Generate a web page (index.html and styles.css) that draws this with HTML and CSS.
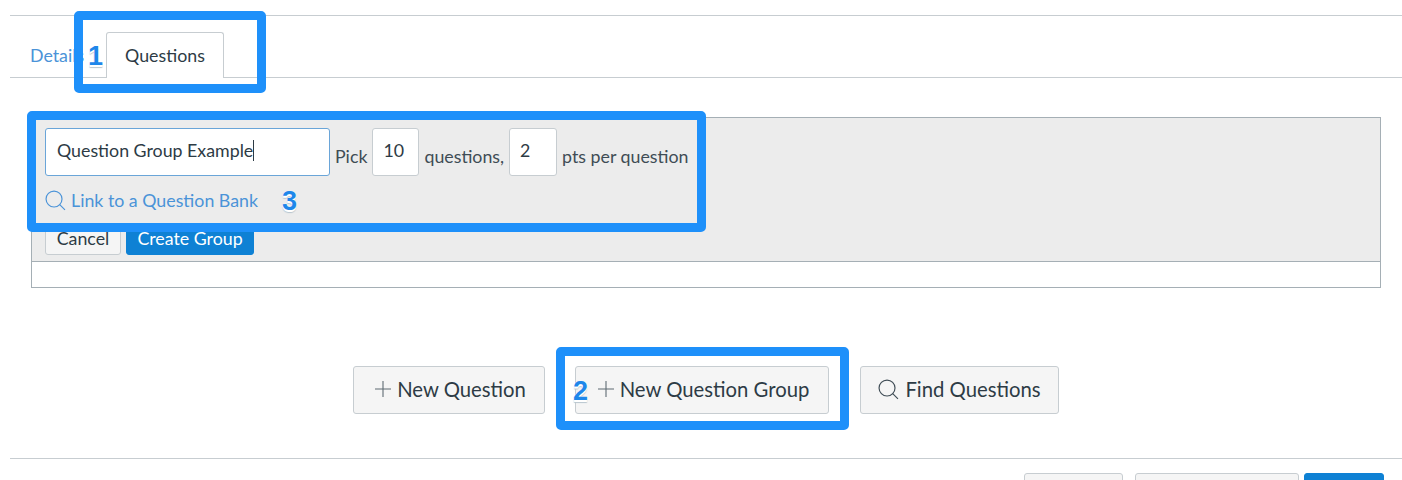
FILE: index.html
```html
<!DOCTYPE html>
<html lang="en">
<head>
<meta charset="utf-8">
<title>Question Group</title>
<link rel="stylesheet" href="styles.css">
</head>
<body>
<div class="page">
  <div class="tabs">
    <a class="tab-link">Details</a>
    <div class="tab-active">Questions</div>
  </div>
  <div class="group">
    <div class="group-form">
      <div class="fields">
        <div class="input name">Question Group Example<span class="caret"></span></div>
        <span class="label">Pick</span>
        <div class="input num n10">10</div>
        <span class="label">questions,</span>
        <div class="input num n2">2</div>
        <span class="label">pts per question</span>
      </div>
      <a class="bank">
        <svg class="ico" viewBox="0 0 20 20"><circle cx="8.6" cy="8.6" r="7.6"/><path d="M14 14l5 5"/></svg>
        Link to a Question Bank
      </a>
      <div class="form-actions">
        <button class="btn small">Cancel</button>
        <button class="btn small primary">Create Group</button>
      </div>
    </div>
    <div class="group-foot"></div>
  </div>
  <div class="actions">
    <button class="btn big q"><svg class="ico plus" viewBox="0 0 16 16"><path d="M8 0v16M0 8h16"/></svg>New Question</button>
    <button class="btn big g"><svg class="ico plus" viewBox="0 0 16 16"><path d="M8 0v16M0 8h16"/></svg>New Question Group</button>
    <button class="btn big f"><svg class="ico find" viewBox="0 0 20 20"><circle cx="8.6" cy="8.6" r="7.6"/><path d="M14 14l5 5"/></svg>Find Questions</button>
  </div>
  <div class="footer">
    <button class="btn foot a"></button>
    <button class="btn foot b"></button>
    <button class="btn foot c primary"></button>
  </div>
</div>
<div class="mark m1"></div>
<div class="mark m2"></div>
<div class="mark m3"></div>
<span class="num-badge b1">1</span>
<span class="num-badge b2">2</span>
<span class="num-badge b3">3</span>
</body>
</html>
```
FILE: styles.css
```css
* { box-sizing: border-box; }
html, body { margin: 0; padding: 0; height: 480px; overflow: hidden; background: #fff; }
body { font-family: Lato, "Open Sans", sans-serif; color: #2d3b45; position: relative; }
.page { margin-left: 10px; padding-top: 15px; height: 480px; overflow: hidden; }
.tabs { border-top: 1px solid #c7cdd1; border-bottom: 1px solid #c7cdd1; height: 63px; display: flex; align-items: flex-end; padding-left: 20px; margin-bottom: 39px; }
.tab-link { color: #4a93d8; font-size: 17.8px; line-height: 20px; margin-bottom: 12px; width: 76px; overflow: hidden; flex: none; }
.tab-active { width: 118px; height: 46px; margin-bottom: -1px; background: #fff; border: 1px solid #c7cdd1; border-bottom: 0; border-radius: 3px 3px 0 0; font-size: 17.8px; text-align: center; line-height: 44px; }
.group { margin: 0 21px 0 21px; border: 1px solid #a5afb5; height: 171px; display: flex; flex-direction: column; }
.group-form { height: 144px; background: #ececec; border-bottom: 1px solid #a5afb5; padding: 10px 13px; }
.fields { display: flex; align-items: flex-start; }
.input { background: #fff; border: 1px solid #c7cdd1; border-radius: 3px; height: 48px; font-size: 17.8px; line-height: 43px; }
.name { width: 285px; border-color: #6aa5d8; padding-left: 11px; }
.caret { display: inline-block; width: 1px; height: 21px; background: #2d3b45; vertical-align: -4px; }
.label { font-size: 17.8px; line-height: 20px; margin-top: 18px; white-space: nowrap; color: #3f4c55; padding: 0 5px; }
.num { padding-left: 10px; }
.n10 { width: 47px; }
.n2 { width: 48px; }
.bank { display: flex; align-items: center; gap: 5px; color: #4a93d8; font-size: 17.8px; line-height: 22px; margin-top: 13px; }
.ico { width: 21px; height: 21px; fill: none; stroke: currentColor; stroke-width: 1.1; flex: none; }
.form-actions { display: flex; gap: 5px; margin-top: 12px; }
.btn { font-family: inherit; color: #2d3b45; background: #f5f5f5; border: 1px solid #c7cdd1; border-radius: 3px; padding: 0; }
.small { height: 32px; font-size: 17.8px; padding-bottom: 3px; }
.small:first-child { width: 76px; }
.small.primary { width: 128px; }
.primary { background: #0e81d4; border-color: #0e81d4; color: #fff; }
.actions { display: flex; height: 48px; margin-top: 78px; padding-left: 343px; }
.big { height: 48px; font-size: 20.3px; display: flex; align-items: center; justify-content: center; padding-bottom: 2px; }
.q, .g { padding-left: 3px; }
.q { width: 192px; }
.g { width: 254px; margin-left: 30px; }
.f { width: 199px; margin-left: 31px; }
.plus { width: 16px; height: 16px; margin-right: 6px; color: #5f6b73; }
.find { margin-right: 6px; color: #3f4c55; }
.footer { border-top: 1px solid #c7cdd1; margin-top: 44px; padding-top: 14px; display: flex; padding-left: 1014px; }
.foot { height: 40px; flex: none; }
.a { width: 99px; }
.b { width: 164px; margin-left: 12px; }
.c { width: 80px; margin-left: 5px; }
.mark { position: absolute; border: 9px solid #1e90fa; border-radius: 5px; }
.m1 { left: 74px; top: 11px; width: 192px; height: 82px; }
.m2 { left: 556px; top: 347px; width: 293px; height: 83px; }
.m3 { left: 27px; top: 111px; width: 679px; height: 121px; }
.num-badge { position: absolute; font-family: "Liberation Sans", sans-serif; font-weight: 700; font-size: 27px; line-height: 30px; color: #1e87ea; text-shadow: 0 0 1px #fff, 0 2px 0 #fff, 0 3px 1px #b9c6cf; }
.b1 { left: 88px; top: 41px; }
.b2 { left: 573px; top: 376px; }
.b3 { left: 282px; top: 186px; }
```
